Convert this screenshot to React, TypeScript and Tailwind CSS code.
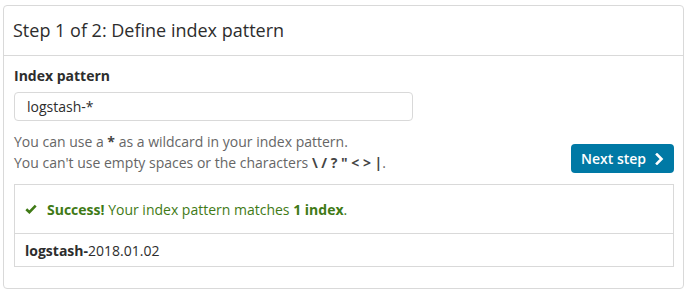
import React from "react";

export default function App() {
  return (
    <div className="w-[692px] h-[293px] bg-white pl-[3px] pt-[5px] font-['Open_Sans',sans-serif]">
      <div className="w-[681px] h-[284px] border border-[#d9d9d9] rounded-[4px] flex flex-col">
        <div className="h-[50px] border-b border-[#d9d9d9] flex items-center pl-[9px]">
          <h1 className="text-[18px] text-[#2d2d2d] leading-[24px] mt-[-1px]">Step 1 of 2: Define index pattern</h1>
        </div>
        <div className="pl-[10px] pr-[9px] pt-[10px] flex flex-col">
          <label className="text-[14px] font-bold text-[#2d2d2d] leading-[20px]">Index pattern</label>
          <div className="mt-[6px] w-[399px] h-[29px] border border-[#d9d9d9] rounded-[4px] flex items-center pl-[12px] text-[14px] text-[#2d2d2d]">
            logstash-*
          </div>
          <div className="mt-[10px] flex items-end justify-between">
            <div className="text-[14px] leading-[21px] text-[#666]">
              <div>
                You can use a <span className="font-bold text-[#444]">*</span> as a wildcard in your index pattern.
              </div>
              <div>
                You can't use empty spaces or the characters{" "}
                <span className="font-bold text-[#444]">{"\\ / ? \" < > |"}</span>.
              </div>
            </div>
            <button className="w-[103px] h-[29px] rounded-[4px] bg-[#0079a5] text-white text-[14px] font-semibold flex items-center justify-center gap-[9px] mb-[0px]">
              <span>Next step</span>
              <svg width="9" height="12" viewBox="0 0 9 12">
                <path d="M2 1.5 L6.5 6 L2 10.5" fill="none" stroke="white" strokeWidth="2.6" strokeLinecap="square" />
              </svg>
            </button>
          </div>
          <div className="mt-[11px] border border-[#d9d9d9] text-[14px] leading-[21px]">
            <div className="h-[48px] flex items-center pl-[10px] text-[#3f7a16]">
              <svg width="12" height="10" viewBox="0 0 12 10" className="mr-[10px]">
                <path d="M1.3 5.2 L4.4 8.2 L10.7 1.6" fill="none" stroke="#3f7a16" strokeWidth="2.6" />
              </svg>
              <span className="font-bold">Success!</span>
              <span>&nbsp;Your index pattern matches&nbsp;</span>
              <span className="font-bold">1 index</span>
              <span>.</span>
            </div>
            <div className="h-[33px] border-t border-[#d9d9d9] flex items-center pl-[10px] text-[#2d2d2d]">
              <span className="font-bold">logstash-</span>
              <span>2018.01.02</span>
            </div>
          </div>
        </div>
      </div>
    </div>
  );
}
